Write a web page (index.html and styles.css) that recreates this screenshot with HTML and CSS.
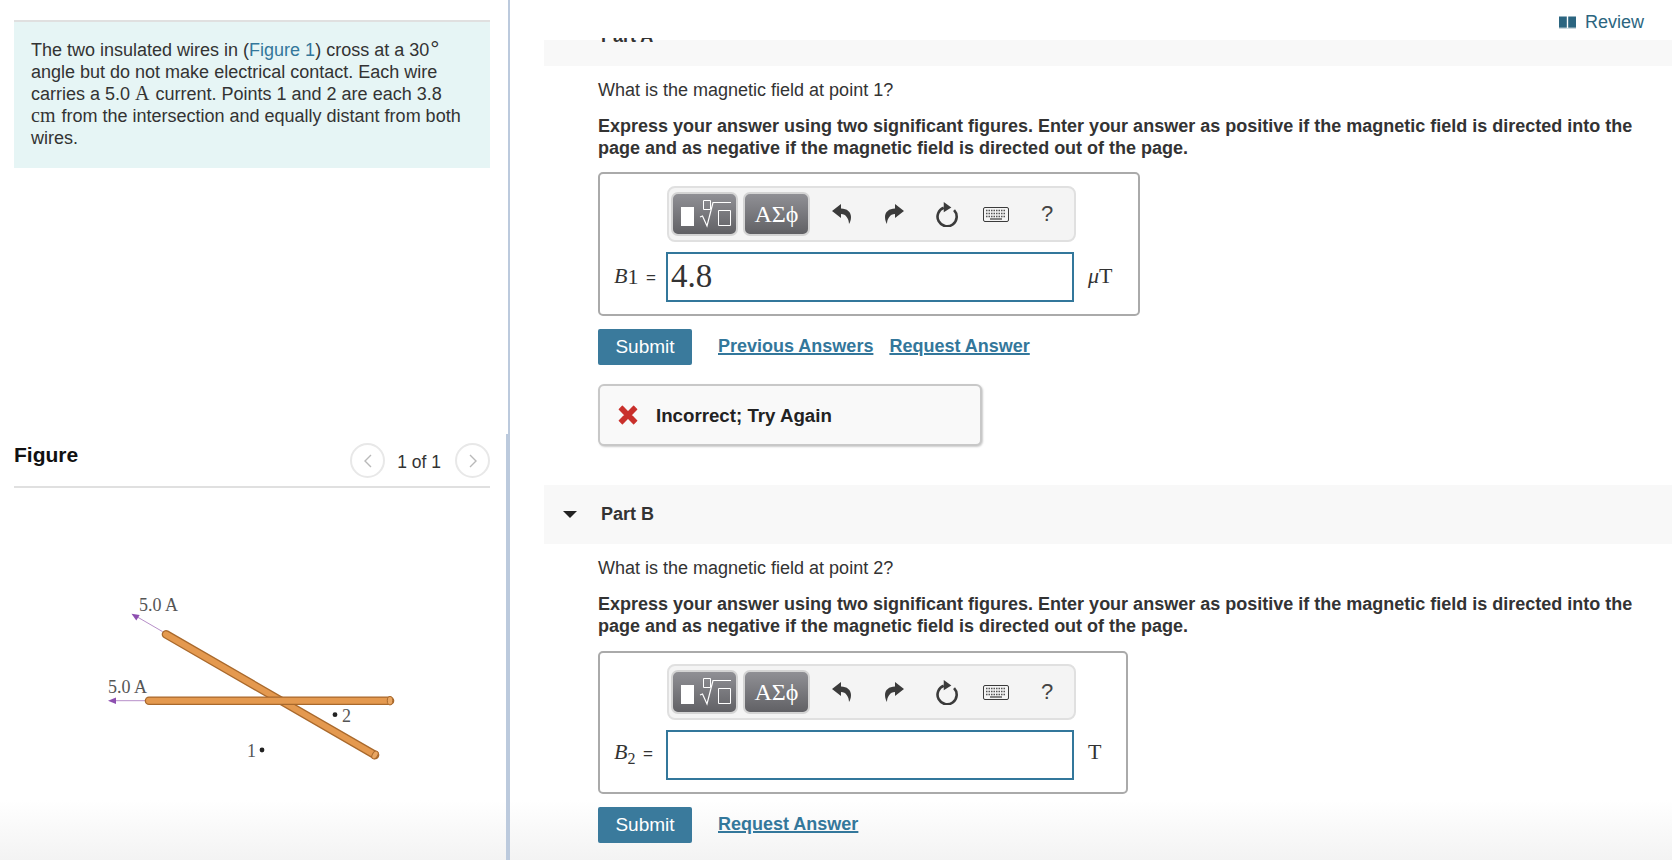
FILE: index.html
```html
<!DOCTYPE html>
<html lang="en">
<head>
    <meta charset="UTF-8">
    <meta name="viewport" content="width=device-width, initial-scale=1.0">
    <title>Magnetic field of crossed wires</title>
    <link rel="stylesheet" href="styles.css">
</head>
<body>
    <div class="page">
        <aside class="left-pane">
            <div class="intro">
                The two insulated wires in (<a href="#" class="fig-link">Figure 1</a>) cross at a 30<sup class="deg">&deg;</sup>
                angle but do not make electrical contact. Each wire carries a 5.0 <span class="math">A</span> current. Points 1 and 2 are each 3.8<br>
                <span class="math">cm</span> from the intersection and equally distant from both wires.
            </div>

            <div class="figure-head">
                <h2>Figure</h2>
                <div class="pager">
                    <span class="pager-btn">
                        <svg width="12" height="16" viewBox="0 0 12 16"><path d="M9 2 3 8l6 6" fill="none" stroke="#b9b9b9" stroke-width="1.4"/></svg>
                    </span>
                    <span class="pager-text">1 of 1</span>
                    <span class="pager-btn">
                        <svg width="12" height="16" viewBox="0 0 12 16"><path d="M3 2l6 6-6 6" fill="none" stroke="#b9b9b9" stroke-width="1.4"/></svg>
                    </span>
                </div>
            </div>

            <svg class="diagram" width="490" height="200" viewBox="0 580 490 200">
                <!-- current arrows -->
                <path d="M162.700 631.700 136 616.200" stroke="#b78fc9" stroke-width="1"/>
                <path d="M131.500 613.800l8.200 1.200-3.400 5.600z" fill="#8d4fb0"/>
                <path d="M145 700.700H114" stroke="#b78fc9" stroke-width="1"/>
                <path d="M108 700.700l8-3.300v6.600z" fill="#8d4fb0"/>

                <!-- diagonal wire -->
                <path d="M166 634.300 375 755" stroke="#a9692c" stroke-width="8.600" stroke-linecap="round"/>
                <path d="M166 634.300 375 755" stroke="#e4994f" stroke-width="6" stroke-linecap="round"/>
                <ellipse cx="375" cy="755" rx="2.700" ry="4.200" transform="rotate(30 375 755)" fill="#e9a662" stroke="#a9692c" stroke-width="1"/>

                <!-- horizontal wire -->
                <path d="M149 700.700H390" stroke="#a9692c" stroke-width="8.600" stroke-linecap="round"/>
                <path d="M149 700.700H390" stroke="#e4994f" stroke-width="6" stroke-linecap="round"/>
                <ellipse cx="390" cy="700.700" rx="2.700" ry="4.200" fill="#e9a662" stroke="#a9692c" stroke-width="1"/>

                <circle cx="335" cy="714.700" r="2.400" fill="#222"/>
                <circle cx="262" cy="750" r="2.400" fill="#222"/>
                <text class="fig-label" x="139" y="611">5.0 A</text>
                <text class="fig-label" x="108" y="693">5.0 A</text>
                <text class="fig-label" x="342" y="722">2</text>
                <text class="fig-label" x="247" y="757">1</text>
            </svg>
        </aside>

        <div class="divider"></div>

        <main class="right-pane">
            <div class="top-bar">
                <a href="#" class="review">
                    <svg width="17" height="13" viewBox="0 0 17 13"><path d="M0 .5h7.800v11.300H0zM9.200.5H17v11.300H9.200z" fill="#2b6580"/><path d="M0 12.200h7.800l.7.600.7-.6H17" fill="none" stroke="#9db8c4" stroke-width=".8"/></svg>
                    Review
                </a>
            </div>

            <section class="part part-first">
                <div class="part-head part-head-a">Part A</div>
                <div class="part-body">
                    <p class="question">What is the magnetic field at point 1?</p>
                    <p class="instructions">Express your answer using two significant figures. Enter your answer as positive if the magnetic field is directed into the page and as negative if the magnetic field is directed out of the page.</p>

                    <div class="answer-box box-a">
                        <div class="toolbar">
                            <span class="tool-btn tool-templates">
                                <svg width="62" height="38" viewBox="0 0 62 38">
                                    <path d="M7 12h13v19H7z" fill="#fff"/>
                                    <path d="M29.500 5.500h7v9h-7z" fill="none" stroke="#fff" stroke-width="1"/>
                                    <path d="M26 22l2.500-1 4.500 10 6-23.500h18" fill="none" stroke="#fff" stroke-width="1.200"/>
                                    <path d="M44.500 15.500h12v15h-12z" fill="none" stroke="#fff" stroke-width="1"/>
                                </svg>
                            </span>
                            <span class="tool-btn tool-symbols">&Alpha;&Sigma;&#981;</span>
                            <svg class="tool-icon tool-undo" width="19" height="20" viewBox="0 0 19 20"><path d="M0 7 9 0V4.500C15 4.500 19 8 19 13 19 16 18 18.500 17 20 17 15 14 10 9 10V14Z" fill="#3b3b3b"/></svg>
                            <svg class="tool-icon tool-redo" width="19" height="20" viewBox="0 0 19 20"><path d="M19 7 10 0V4.500C4 4.500 0 8 0 13 0 16 1 18.500 2 20 2 15 5 10 10 10V14Z" fill="#3b3b3b"/></svg>
                            <svg class="tool-icon tool-reload" width="24" height="25" viewBox="0 0 22 23"><path d="M17.500 7.500A8.800 8.800 0 1 1 8 5.300" fill="none" stroke="#3b3b3b" stroke-width="2.400"/><path d="M8 0l7 5-7 4.500z" fill="#3b3b3b"/></svg>
                            <svg class="tool-icon tool-keys" width="26" height="15" viewBox="0 0 26 15"><rect x=".5" y=".5" width="25" height="14" rx="1.500" fill="#f4f4f4" stroke="#3b3b3b"/><path d="M3 3.500h20M3 6.500h20M3 9.500h20" stroke="#555" stroke-width="1.300" stroke-dasharray="1.500 1"/><path d="M7 12h12" stroke="#555" stroke-width="1.400"/></svg>
                            <span class="tool-help">?</span>
                        </div>
                        <div class="answer-row">
                            <span class="var"><i>B</i><span class="sub-plain">1</span> <span class="eq">=</span></span>
                            <div class="answer-input">4.8</div>
                            <span class="unit"><i>&mu;</i>T</span>
                        </div>
                    </div>

                    <div class="actions">
                        <button class="submit">Submit</button>
                        <a href="#" class="action-link link-first">Previous Answers</a>
                        <a href="#" class="action-link">Request Answer</a>
                    </div>

                    <div class="feedback">
                        <svg width="20" height="20" viewBox="2 2 16 16"><path d="M3 5.500 5.500 3 10 7.500 14.500 3 17 5.500 12.500 10l4.500 4.500-2.500 2.500-4.500-4.500L5.500 17 3 14.500 7.500 10z" fill="#c9302c" stroke="#c9302c" stroke-width="1" stroke-linejoin="round"/></svg>
                        <span class="feedback-text">Incorrect; Try Again</span>
                    </div>
                </div>
            </section>

            <section class="part">
                <div class="part-head part-head-b">
                    <span class="caret"></span>
                    Part B
                </div>
                <div class="part-body">
                    <p class="question">What is the magnetic field at point 2?</p>
                    <p class="instructions">Express your answer using two significant figures. Enter your answer as positive if the magnetic field is directed into the page and as negative if the magnetic field is directed out of the page.</p>

                    <div class="answer-box box-b">
                        <div class="toolbar">
                            <span class="tool-btn tool-templates">
                                <svg width="62" height="38" viewBox="0 0 62 38">
                                    <path d="M7 12h13v19H7z" fill="#fff"/>
                                    <path d="M29.500 5.500h7v9h-7z" fill="none" stroke="#fff" stroke-width="1"/>
                                    <path d="M26 22l2.500-1 4.500 10 6-23.500h18" fill="none" stroke="#fff" stroke-width="1.200"/>
                                    <path d="M44.500 15.500h12v15h-12z" fill="none" stroke="#fff" stroke-width="1"/>
                                </svg>
                            </span>
                            <span class="tool-btn tool-symbols">&Alpha;&Sigma;&#981;</span>
                            <svg class="tool-icon tool-undo" width="19" height="20" viewBox="0 0 19 20"><path d="M0 7 9 0V4.500C15 4.500 19 8 19 13 19 16 18 18.500 17 20 17 15 14 10 9 10V14Z" fill="#3b3b3b"/></svg>
                            <svg class="tool-icon tool-redo" width="19" height="20" viewBox="0 0 19 20"><path d="M19 7 10 0V4.500C4 4.500 0 8 0 13 0 16 1 18.500 2 20 2 15 5 10 10 10V14Z" fill="#3b3b3b"/></svg>
                            <svg class="tool-icon tool-reload" width="24" height="25" viewBox="0 0 22 23"><path d="M17.500 7.500A8.800 8.800 0 1 1 8 5.300" fill="none" stroke="#3b3b3b" stroke-width="2.400"/><path d="M8 0l7 5-7 4.500z" fill="#3b3b3b"/></svg>
                            <svg class="tool-icon tool-keys" width="26" height="15" viewBox="0 0 26 15"><rect x=".5" y=".5" width="25" height="14" rx="1.500" fill="#f4f4f4" stroke="#3b3b3b"/><path d="M3 3.500h20M3 6.500h20M3 9.500h20" stroke="#555" stroke-width="1.300" stroke-dasharray="1.500 1"/><path d="M7 12h12" stroke="#555" stroke-width="1.400"/></svg>
                            <span class="tool-help">?</span>
                        </div>
                        <div class="answer-row">
                            <span class="var"><i>B</i><sub>2</sub> <span class="eq">=</span></span>
                            <div class="answer-input"></div>
                            <span class="unit">T</span>
                        </div>
                    </div>

                    <div class="actions">
                        <button class="submit">Submit</button>
                        <a href="#" class="action-link link-first">Request Answer</a>
                    </div>
                </div>
            </section>
        </main>
    </div>
</body>
</html>
```

FILE: styles.css
```css
html, body {
    height: 100%;
    margin: 0;
    overflow: hidden;
}
body {
    font-family: "Liberation Sans", Arial, sans-serif;
    font-size: 18px;
    color: #333;
    background: linear-gradient(#fff 800px, #f3f3f3 860px);
}
a {
    color: #33779b;
    text-decoration: none;
}
.page {
    display: flex;
    height: 860px;
    overflow: hidden;
}

/* left column */
.left-pane {
    width: 506px;
    flex: none;
    padding: 20px 16px 0 14px;
    box-sizing: border-box;
}
.intro {
    height: 148px;
    box-sizing: border-box;
    padding: 17px 10px 0 17px;
    background-color: #e6f5f5;
    border-top: 2px solid #e0e0e0;
    line-height: 22px;
}
.fig-link {
    color: #33779b;
}
.deg {
    font-size: 23px;
    line-height: 0;
    vertical-align: -1px;
    margin-left: 1px;
}
.math {
    margin-right: 1px;
    font-family: "Liberation Serif", serif;
    font-size: 20px;
    line-height: 20px;
}
.figure-head {
    display: flex;
    justify-content: space-between;
    align-items: center;
    height: 56px;
    margin-top: 264px;
    border-bottom: 2px solid #e0e0e0;
    box-sizing: border-box;
}
.figure-head h2 {
    margin: 0 0 8px;
    font-size: 21px;
    color: #111;
}
.pager {
    display: flex;
    align-items: center;
    gap: 12px;
    margin-top: 3px;
}
.pager-btn {
    display: flex;
    align-items: center;
    justify-content: center;
    width: 31px;
    height: 31px;
    border: 2px solid #e8e8e8;
    border-radius: 50%;
}
.pager-text {
    margin: 4px 2px 0 0;
    font-size: 17.500px;
}
.diagram {
    display: block;
    margin: 92px 0 0 -14px;
}
.fig-label {
    font-family: "Liberation Serif", serif;
    font-size: 18px;
    fill: #555;
}
.divider {
    width: 4px;
    flex: none;
    background:
        linear-gradient(#bccadd, #bccadd) right top / 2px 434px no-repeat,
        linear-gradient(#bccadd, #bccadd) right 434px / 4px 100% no-repeat;
}

/* right column */
.right-pane {
    flex: 1;
    position: relative;
    padding: 6px 0 0 34px;
    min-width: 0;
}
.top-bar {
    position: absolute;
    top: 0;
    left: 0;
    right: 0;
    height: 38px;
    background-color: #fff;
    z-index: 2;
}
.review {
    position: absolute;
    top: 12px;
    right: 28px;
    display: flex;
    align-items: center;
    gap: 9px;
    color: #2b6580;
}
.part-first {
    padding-bottom: 39px;
}
.part-head {
    display: flex;
    align-items: center;
    height: 60px;
    padding-left: 19px;
    background-color: #f8f8f8;
    font-weight: bold;
    color: #333;
}
.part-head-a {
    padding-left: 57px;
    background: linear-gradient(#fff 34px, #f8f8f8 34px);
}
.part-head-b {
    height: 59px;
}
.caret {
    width: 0;
    height: 0;
    margin-right: 24px;
    border-left: 7px solid transparent;
    border-right: 7px solid transparent;
    border-top: 7px solid #222;
}
.part-body {
    padding: 0 30px 0 54px;
}
.question {
    margin: 0;
    padding-top: 13px;
    line-height: 22px;
}
.instructions {
    margin: 14px 0 0;
    line-height: 22px;
    font-weight: bold;
}
.answer-box {
    border: 2px solid #aaa;
    border-radius: 5px;
    box-sizing: border-box;
    padding-left: 67px;
}
.box-a {
    width: 542px;
    height: 144px;
    margin-top: 13px;
    padding-top: 12px;
}
.box-b {
    width: 530px;
    height: 143px;
    margin-top: 14px;
    padding-top: 11px;
}
.toolbar {
    display: flex;
    align-items: center;
    width: 409px;
    height: 56px;
    box-sizing: border-box;
    padding-left: 2px;
    background-color: #f4f4f4;
    border: 2px solid #e0e0e0;
    border-radius: 8px;
}
.tool-btn {
    display: flex;
    align-items: center;
    justify-content: center;
    flex: none;
    width: 67px;
    height: 44px;
    box-sizing: border-box;
    border: 2px solid #d4d4d4;
    border-radius: 7px;
    background: linear-gradient(#909095, #616165);
    color: #fff;
}
.tool-symbols {
    margin-left: 5px;
    font-family: "Liberation Serif", serif;
    font-size: 24px;
}
.tool-icon {
    flex: none;
}
.tool-undo {
    margin-left: 22px;
}
.tool-redo {
    margin-left: 34px;
}
.tool-reload {
    margin-left: 31px;
}
.tool-keys {
    margin-left: 24px;
}
.tool-help {
    margin-left: 32px;
    font-size: 22px;
    color: #444;
}
.answer-row {
    display: flex;
    align-items: center;
    margin: 10px 0 0 -53px;
}
.var {
    width: 52px;
    margin-bottom: 3px;
    font-family: "Liberation Serif", serif;
    font-size: 22px;
    white-space: nowrap;
}
.var sub {
    font-size: 16px;
    line-height: 0;
}
.sub-plain {
    position: relative;
    top: 1px;
}
.eq {
    margin-left: 2px;
    font-family: "Liberation Sans", sans-serif;
    font-size: 17px;
}
.answer-input {
    flex: none;
    width: 408px;
    height: 50px;
    box-sizing: border-box;
    padding-left: 3px;
    border: 2px solid #33779b;
    font-family: "Liberation Serif", serif;
    font-size: 33px;
    line-height: 44px;
}
.unit {
    margin: 0 0 3px 14px;
    font-family: "Liberation Serif", serif;
    font-size: 22px;
}
.box-b .var,
.box-b .unit {
    margin-bottom: 7px;
}
.actions {
    display: flex;
    align-items: center;
    margin-top: 13px;
}
.submit {
    width: 94px;
    height: 36px;
    border: none;
    border-radius: 2px;
    background-color: #3a7a9c;
    color: #fff;
    font-family: "Liberation Sans", Arial, sans-serif;
    font-size: 19px;
}
.action-link {
    margin: -2px 0 0 16px;
    font-weight: bold;
    text-decoration: underline;
    text-decoration-thickness: 2px;
}
.link-first {
    margin-left: 26px;
}
.feedback {
    display: flex;
    align-items: center;
    gap: 18px;
    width: 384px;
    height: 62px;
    margin-top: 19px;
    padding-left: 18px;
    box-sizing: border-box;
    background-color: #f9f9f9;
    border: 2px solid #c8c8c8;
    border-radius: 6px;
    box-shadow: 1px 1px 2px #ccc;
    font-weight: bold;
    font-size: 18.700px;
    color: #222;
}
.feedback-text {
    margin-top: 1px;
}
```
